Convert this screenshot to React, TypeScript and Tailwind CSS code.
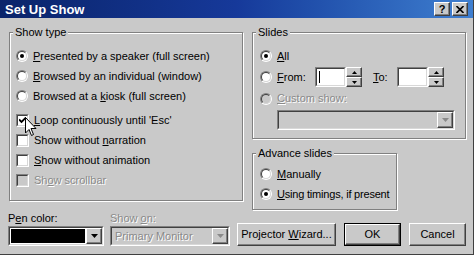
import React from "react";

const raised =
  "border border-t-white border-l-white border-r-[#404040] border-b-[#404040] shadow-[inset_-1px_-1px_0_#808080]";
const sunkenOuter =
  "border border-t-[#808080] border-l-[#808080] border-b-white border-r-white";
const sunkenInner =
  "border border-t-[#404040] border-l-[#404040] border-b-[#d8d8d8] border-r-[#d8d8d8]";
const disabledText = "text-[#8a8a8a] [text-shadow:1px_1px_0_#ffffff]";

function U({ children }: { children: React.ReactNode }) {
  return <span className="underline underline-offset-[1px]">{children}</span>;
}

function Radio({ checked, disabled }: { checked?: boolean; disabled?: boolean }) {
  return (
    <span className={`relative w-[12px] h-[12px] rounded-full shrink-0 ${sunkenOuter}`}>
      <span
        className={`absolute inset-0 rounded-full flex items-center justify-center ${sunkenInner} ${
          disabled ? "bg-[#c9c9c9]" : "bg-white"
        }`}
      >
        {checked && <span className="w-[4px] h-[4px] rounded-full bg-black" />}
      </span>
    </span>
  );
}

function Check({ checked, disabled }: { checked?: boolean; disabled?: boolean }) {
  return (
    <span className={`w-[13px] h-[13px] shrink-0 flex ${sunkenOuter}`}>
      <span
        className={`flex-1 flex items-center justify-center ${sunkenInner} ${
          disabled ? "bg-[#c9c9c9]" : "bg-white"
        }`}
      >
        {checked && (
          <svg width="7" height="7" viewBox="0 0 7 7">
            <path d="M0 2.5 L2.5 5 L7 0.5" stroke="#000" strokeWidth="1.8" fill="none" />
          </svg>
        )}
      </span>
    </span>
  );
}

function Row({
  h,
  children,
  className = "",
}: {
  h: string;
  children: React.ReactNode;
  className?: string;
}) {
  return <div className={`flex items-center gap-[5px] ${h} ${className}`}>{children}</div>;
}

function Spinner() {
  return (
    <div className="w-[16px] h-[20px] flex flex-col">
      <div className={`flex-1 bg-[#c9c9c9] flex items-center justify-center ${raised}`}>
        <svg width="5" height="3" viewBox="0 0 5 3">
          <path d="M2.5 0 L5 3 L0 3 Z" fill="#000" />
        </svg>
      </div>
      <div className={`flex-1 bg-[#c9c9c9] flex items-center justify-center ${raised}`}>
        <svg width="5" height="3" viewBox="0 0 5 3">
          <path d="M0 0 L5 0 L2.5 3 Z" fill="#000" />
        </svg>
      </div>
    </div>
  );
}

function NumInput({ caret }: { caret?: boolean }) {
  return (
    <div className={`w-[31px] h-[20px] flex ${sunkenOuter}`}>
      <div className={`flex-1 bg-white flex items-center pl-[2px] ${sunkenInner}`}>
        {caret && <span className="w-[1px] h-[12px] bg-black" />}
      </div>
    </div>
  );
}

function ArrowBtn({ disabled }: { disabled?: boolean }) {
  return (
    <div className={`w-[16px] h-full bg-[#c9c9c9] flex items-center justify-center ${raised}`}>
      <svg width="7" height="4" viewBox="0 0 7 4">
        <path d="M0 0 L7 0 L3.5 4 Z" fill={disabled ? "#8a8a8a" : "#000"} />
      </svg>
    </div>
  );
}

function Group({
  label,
  className,
  children,
}: {
  label: string;
  className: string;
  children: React.ReactNode;
}) {
  return (
    <fieldset
      className={`border border-[#808080] shadow-[1px_1px_0_#ffffff,inset_1px_1px_0_#ffffff] ${className}`}
    >
      <legend className="ml-[3px] px-[2px] bg-[#c9c9c9] leading-[13px]">{label}</legend>
      {children}
    </fieldset>
  );
}

export default function App() {
  return (
    <div className="relative w-[474px] h-[255px] bg-[#c9c9c9] text-[11px] leading-[13px] text-black font-['Liberation_Sans',Arial,sans-serif] flex flex-col border-r border-b border-[#404040] overflow-hidden">
      {/* Title bar */}
      <div className="h-[18px] shrink-0 flex items-center justify-between pl-[5px] pr-[5px] bg-gradient-to-r from-[#0a246a] via-[#16399a] to-[#3f7fd0]">
        <span className="text-white font-bold text-[13px] leading-[15px]">Set Up Show</span>
        <div className="flex gap-[2px]">
          <div className={`w-[16px] h-[14px] bg-[#c9c9c9] flex items-center justify-center ${raised}`}>
            <span className="font-bold text-[11px] leading-[11px]">?</span>
          </div>
          <div className={`w-[16px] h-[14px] bg-[#c9c9c9] flex items-center justify-center ${raised}`}>
            <svg width="8" height="7" viewBox="0 0 8 7">
              <path d="M0.5 0 L7.5 7 M7.5 0 L0.5 7" stroke="#000" strokeWidth="1.6" />
            </svg>
          </div>
        </div>
      </div>

      {/* Top section */}
      <div className="mt-[8px] flex pl-[9px] gap-[9px]">
        <Group label="Show type" className="w-[234px] h-[175px]">
          <div className="pl-[6px] pt-[7px] flex flex-col">
            <Row h="h-[20px]">
              <Radio checked />
              <span>
                <U>P</U>resented by a speaker (full screen)
              </span>
            </Row>
            <Row h="h-[20px]">
              <Radio />
              <span>
                <U>B</U>rowsed by an individual (window)
              </span>
            </Row>
            <Row h="h-[20px]">
              <Radio />
              <span>
                Browsed at a <U>k</U>iosk (full screen)
              </span>
            </Row>
            <Row h="h-[20px]" className="mt-[4px]">
              <Check checked />
              <span>
                <U>L</U>oop continuously until 'Esc'
              </span>
            </Row>
            <Row h="h-[20px]">
              <Check />
              <span>
                Show without <U>n</U>arration
              </span>
            </Row>
            <Row h="h-[20px]">
              <Check />
              <span>
                <U>S</U>how without animation
              </span>
            </Row>
            <Row h="h-[20px]">
              <Check disabled />
              <span className={disabledText}>
                Sh<U>o</U>w scrollbar
              </span>
            </Row>
          </div>
        </Group>

        <div className="w-[214px] flex flex-col">
          <Group label="Slides" className="w-[214px] h-[113px]">
            <div className="pl-[7px] pt-[7px] flex flex-col">
              <Row h="h-[20px]">
                <Radio checked />
                <span>
                  <U>A</U>ll
                </span>
              </Row>
              <Row h="h-[22px]">
                <Radio />
                <span className="w-[38px]">
                  <U>F</U>rom:
                </span>
                <div className="flex -ml-[5px]">
                  <NumInput caret />
                  <Spinner />
                </div>
                <span className="ml-[6px] w-[19px]">
                  <U>T</U>o:
                </span>
                <div className="flex">
                  <NumInput />
                  <Spinner />
                </div>
              </Row>
              <Row h="h-[21px]">
                <Radio disabled />
                <span className={disabledText}>
                  <U>C</U>ustom show:
                </span>
              </Row>
              <div className={`ml-[17px] mt-[1px] w-[178px] h-[20px] flex ${sunkenOuter}`}>
                <div className={`flex-1 flex justify-end bg-[#c9c9c9] ${sunkenInner}`}>
                  <ArrowBtn disabled />
                </div>
              </div>
            </div>
          </Group>

          <Group label="Advance slides" className="mt-[8px] w-[145px] h-[63px]">
            <div className="pl-[7px] pt-[4px] flex flex-col">
              <Row h="h-[20px]">
                <Radio />
                <span>
                  <U>M</U>anually
                </span>
              </Row>
              <Row h="h-[20px]">
                <Radio checked />
                <span className="tracking-[-0.2px]">
                  <U>U</U>sing timings, if present
                </span>
              </Row>
            </div>
          </Group>
        </div>
      </div>

      {/* Bottom section */}
      <div className="mt-[2px] flex items-end pl-[8px]">
        <div className="w-[96px] flex flex-col">
          <span>
            P<U>e</U>n color:
          </span>
          <div className={`mt-[1px] h-[20px] flex ${sunkenOuter}`}>
            <div className={`flex-1 flex bg-white ${sunkenInner}`}>
              <div className="flex-1 p-[1px] bg-white">
                <div className="w-full h-full bg-black" />
              </div>
              <ArrowBtn />
            </div>
          </div>
        </div>

        <div className="ml-[6px] w-[120px] flex flex-col">
          <span className={disabledText}>
            Show <U>o</U>n:
          </span>
          <div className={`mt-[1px] h-[20px] flex ${sunkenOuter}`}>
            <div className={`flex-1 flex bg-[#c9c9c9] ${sunkenInner}`}>
              <div className={`flex-1 flex items-center pl-[3px] ${disabledText}`}>Primary Monitor</div>
              <ArrowBtn disabled />
            </div>
          </div>
        </div>

        <button className={`ml-[7px] w-[99px] h-[23px] bg-[#c9c9c9] ${raised}`}>
          Projector <U>W</U>izard...
        </button>
        <div className="ml-[8px] w-[57px] h-[23px] border border-black flex">
          <button className={`flex-1 bg-[#c9c9c9] ${raised}`}>OK</button>
        </div>
        <button className={`ml-[8px] w-[57px] h-[23px] bg-[#c9c9c9] ${raised}`}>Cancel</button>
      </div>

      {/* Mouse cursor */}
      <svg
        className="absolute left-[25px] top-[117px]"
        width="12"
        height="20"
        viewBox="0 0 12 20"
      >
        <path
          d="M0.5 0.5 L0.5 16 L4 12.5 L6.5 18.5 L8.5 17.5 L6 11.5 L11 11.5 Z"
          fill="#fff"
          stroke="#000"
          strokeWidth="1"
        />
      </svg>
    </div>
  );
}
